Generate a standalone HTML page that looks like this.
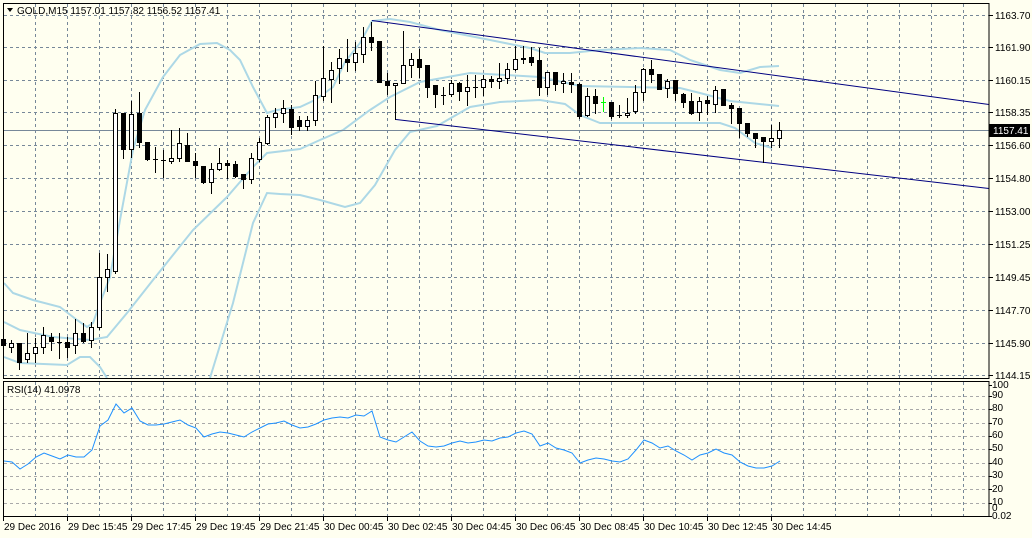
<!DOCTYPE html>
<html><head><meta charset="utf-8"><style>
html,body{margin:0;padding:0;background:#fffff0;}
svg{display:block}
text{font-family:"Liberation Sans",sans-serif;font-size:10px;fill:#000}
</style></head><body>
<svg id="s" width="1032" height="538" xmlns="http://www.w3.org/2000/svg"></svg>
<script>
var s=document.getElementById('s'),h='';
h+='<rect width="1032" height="538" fill="#fffff0"/>';
var vx=[];for(var k=1;k<=31;k++){vx.push(3+32*k+0.5);}
var hy=[15,47,80,112,145,178,211,244,277,310,343,375];
var hl=['1163.70','1161.90','1160.15','1158.35','1156.60','1154.80','1153.00','1151.25','1149.45','1147.70','1145.90','1144.15'];
vx.forEach(function(x){if(x<989){h+='<line x1="'+x+'" y1="4" x2="'+x+'" y2="378" stroke="#778899" stroke-dasharray="3,3"/>';h+='<line x1="'+x+'" y1="382" x2="'+x+'" y2="516" stroke="#778899" stroke-dasharray="3,3"/>';}});
hy.forEach(function(y,i){h+='<line x1="4" y1="'+(y+.5)+'" x2="989" y2="'+(y+.5)+'" stroke="#778899" stroke-dasharray="3,3"/>';h+='<line x1="989" y1="'+(y+.5)+'" x2="993" y2="'+(y+.5)+'" stroke="#000"/>';h+='<text x="995" y="'+(y+4)+'">'+hl[i]+'</text>';});
var ry=[396,409,423,436,449,463,476,489,503];
ry.forEach(function(y){h+='<line x1="4" y1="'+(y+.5)+'" x2="989" y2="'+(y+.5)+'" stroke="#a9a9a9" stroke-dasharray="3,3"/>';});
var rl=[['100',388],['90',398],['80',411],['70',425],['60',438],['50',451],['40',465],['30',478],['20',492],['10',505],['0',511],['0.02',519]];
rl.forEach(function(r){h+='<text x="992" y="'+r[1]+'">'+r[0]+'</text>';});
[385,396,409,423,436,449,463,476,489,503,516].forEach(function(y){h+='<line x1="989" y1="'+(y+.5)+'" x2="992" y2="'+(y+.5)+'" stroke="#000"/>';});
function pl(pts,c,w){h+='<polyline fill="none" stroke="'+c+'" stroke-width="'+w+'" points="'+pts.map(function(p){return p.join(',')}).join(' ')+'"/>';}
var lb='#add8e6';
pl([[4,283],[13,293],[33,300],[60,307],[77,320],[87,327],[93,323],[100,303],[110,277],[120,220],[133,150],[145,110],[163,77],[180,55],[200,44],[217,43],[230,50],[240,60],[253,87],[267,113],[277,110],[300,107],[315,100],[333,87],[345,62],[360,43],[372,21],[390,19],[410,22],[440,30],[470,36],[500,42],[530,48],[545,53],[570,53],[600,50],[640,48],[670,50],[690,60],[720,70],[740,73],[760,67],[779,66]],lb,2);
pl([[4,322],[20,330],[53,337],[90,340],[107,337],[127,313],[153,280],[193,230],[227,197],[253,167],[267,153],[300,149],[320,140],[343,130],[370,110],[390,97],[420,82],[470,73],[540,77],[580,86],[680,88],[700,93],[730,101],[779,106]],lb,2);
pl([[4,357],[20,363],[67,365],[80,357],[90,357],[100,367],[107,378]],lb,2);
pl([[210,378],[233,303],[253,223],[267,193],[280,194],[300,195],[320,200],[345,207],[360,203],[375,185],[395,150],[410,132],[437,126],[470,107],[500,102],[540,100],[565,104],[580,115],[600,123],[720,123],[735,128],[755,143],[772,148]],lb,2);
h+='<line x1="4" y1="130.5" x2="989" y2="130.5" stroke="#778899"/>';
h+='<line x1="372" y1="20.5" x2="989" y2="104.5" stroke="#000080"/>';
h+='<line x1="396" y1="119.5" x2="989" y2="188.5" stroke="#000080"/>';
var C=[[3,339,345,337,349,'b'],[11,343,347,340,352,'w'],[19,343,362,343,369,'b'],[27,353,359,333,362,'w'],[35,347,353,338,362,'w'],[43,335,347,327,353,'w'],[51,337,341,333,350,'b'],[59,342,342,333,358,'d'],[67,342,347,337,357,'b'],[75,333,345,319,353,'w'],[83,333,341,323,342,'b'],[91,327,340,322,347,'w'],[99,277,327,253,329,'w'],[107,269,277,254,291,'w'],[115,113,271,109,273,'w'],[123,113,149,113,158,'b'],[131,114,149,101,157,'w'],[139,113,142,92,147,'b'],[147,142,159,142,160,'b'],[155,159,159,147,172,'d'],[163,160,160,150,177,'d'],[171,158,161,130,163,'w'],[179,143,158,128,161,'w'],[187,145,161,133,161,'b'],[195,161,165,153,177,'b'],[203,166,182,166,183,'b'],[211,169,182,163,193,'w'],[219,163,169,148,170,'w'],[227,163,165,160,178,'b'],[235,164,176,161,177,'b'],[243,174,179,174,188,'b'],[251,158,179,153,183,'w'],[259,142,159,138,161,'w'],[267,117,143,115,144,'w'],[275,113,117,108,127,'w'],[283,108,113,100,122,'w'],[291,109,127,105,134,'b'],[299,120,126,116,130,'b'],[307,120,126,116,130,'w'],[315,95,120,81,125,'w'],[323,78,96,46,100,'w'],[331,70,79,62,102,'w'],[339,58,68,49,83,'w'],[347,59,62,39,71,'b'],[355,53,62,42,70,'w'],[363,37,54,27,62,'w'],[371,37,42,22,50,'b'],[379,41,82,41,82,'b'],[387,81,85,73,94,'b'],[395,83,85,83,119,'w'],[403,65,83,31,83,'w'],[411,59,65,53,77,'w'],[419,59,67,49,77,'b'],[427,65,87,65,97,'b'],[435,85,94,85,107,'b'],[443,95,95,87,104,'d'],[451,83,94,80,96,'w'],[459,83,91,82,100,'b'],[467,87,91,75,105,'w'],[475,87,87,75,97,'d'],[483,79,87,75,95,'w'],[491,79,81,76,87,'b'],[499,78,81,63,88,'w'],[507,69,78,63,83,'w'],[515,59,69,46,70,'w'],[523,58,59,46,63,'b'],[531,57,62,47,65,'b'],[539,60,87,48,95,'b'],[547,72,87,72,94,'w'],[555,72,84,72,90,'b'],[563,81,83,73,92,'w'],[571,82,84,73,92,'b'],[579,84,116,83,118,'b'],[587,96,115,88,116,'w'],[595,96,103,89,113,'b'],[603,102,102,97,111,'g'],[611,102,116,102,118,'b'],[619,115,115,105,117,'d'],[627,113,115,98,117,'w'],[635,92,111,85,113,'w'],[643,69,92,68,100,'w'],[651,69,74,60,82,'b'],[659,74,89,74,89,'b'],[667,81,88,79,97,'w'],[675,80,93,80,100,'b'],[683,94,102,93,107,'b'],[691,101,113,93,114,'b'],[699,101,112,97,120,'w'],[707,100,103,96,114,'b'],[715,90,104,86,112,'w'],[723,89,105,89,105,'b'],[731,105,108,103,123,'b'],[739,108,123,108,137,'b'],[747,123,133,123,136,'b'],[755,133,138,133,147,'b'],[763,137,141,137,162,'b'],[771,138,141,125,147,'w'],[779,130,138,122,147,'w']];
C.forEach(function(c){var x=c[0]+.5,col=c[5]=='g'?'#00ff00':'#000';
h+='<line x1="'+x+'" y1="'+c[3]+'" x2="'+x+'" y2="'+(c[4]+1)+'" stroke="'+col+'"/>';
if(c[5]=='d'||c[5]=='g'){h+='<line x1="'+(x-2.5)+'" y1="'+(c[1]+.5)+'" x2="'+(x+2.5)+'" y2="'+(c[1]+.5)+'" stroke="'+col+'"/>';}
else{var hh=Math.max(c[2]-c[1],1);h+='<rect x="'+(c[0]-2+.5)+'" y="'+(c[1]+.5)+'" width="4" height="'+hh+'" fill="'+(c[5]=='w'?'#fff':'#000')+'" stroke="#000"/>';}
});
h+='<rect x="989" y="124" width="41" height="13" fill="#000"/><text x="993" y="134" style="fill:#fff">1157.41</text>';
h+='<rect x="3.5" y="3.5" width="985.5" height="375" fill="none" stroke="#000"/>';
h+='<rect x="3.5" y="381.5" width="985.5" height="135" fill="none" stroke="#000"/>';
h+='<path d="M7,8 L13,8 L10,12 Z" fill="#000"/><text x="17" y="14">GOLD,M15  1157.01 1157.82 1156.52 1157.41</text>';
h+='<text x="7" y="393">RSI(14) 41.0978</text>';
var R=[[4,461],[12,462],[20,469],[28,464],[36,457],[44,453],[52,456],[60,459],[68,455],[76,457],[84,457],[92,450],[100,426],[108,420],[116,404],[124,413],[132,408],[140,421],[148,425],[156,425],[164,424],[172,422],[180,420],[188,425],[196,428],[204,437],[212,434],[220,432],[228,433],[236,435],[244,437],[252,432],[260,428],[268,424],[276,423],[284,421],[292,425],[300,428],[308,427],[316,424],[324,420],[332,418],[340,417],[348,418],[356,415],[364,416],[372,411],[380,437],[388,440],[396,442],[404,437],[412,432],[420,441],[428,446],[436,447],[444,446],[452,443],[460,441],[468,443],[476,442],[484,440],[492,441],[500,438],[508,437],[516,433],[524,431],[532,434],[540,446],[548,443],[556,448],[564,450],[572,453],[580,463],[588,460],[596,458],[604,459],[612,461],[620,462],[628,459],[636,450],[644,440],[652,443],[660,448],[668,446],[676,451],[684,455],[692,460],[700,455],[708,453],[716,449],[724,453],[732,455],[740,462],[748,466],[756,468],[764,468],[772,466],[780,461]];
pl(R,'#1e90ff',1);
var T=[['29 Dec 2016',3],['29 Dec 15:45',67],['29 Dec 17:45',131],['29 Dec 19:45',195],['29 Dec 21:45',259],['30 Dec 00:45',323],['30 Dec 02:45',387],['30 Dec 04:45',451],['30 Dec 06:45',515],['30 Dec 08:45',579],['30 Dec 10:45',643],['30 Dec 12:45',707],['30 Dec 14:45',771]];
T.forEach(function(t){h+='<line x1="'+(t[1]+.5)+'" y1="517" x2="'+(t[1]+.5)+'" y2="521" stroke="#000"/><text x="'+(t[1]+1)+'" y="530">'+t[0]+'</text>';});
s.innerHTML=h;
</script>
</body></html>
